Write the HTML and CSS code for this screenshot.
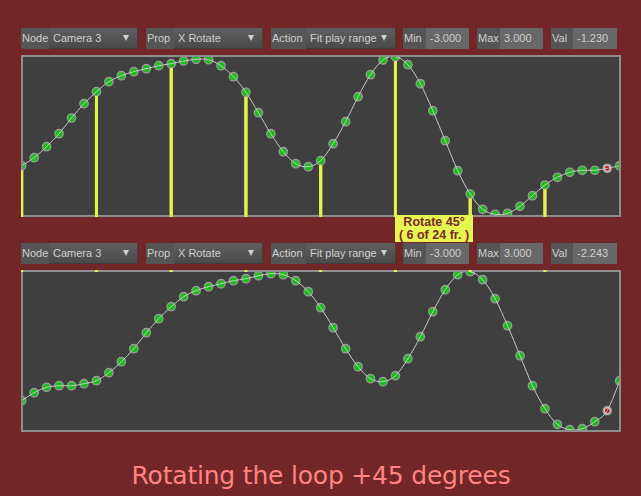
FILE: index.html
```html
<!DOCTYPE html>
<html>
<head>
<meta charset="utf-8">
<link rel="stylesheet" href="styles.css">
</head>
<body>
<div class="page">
  <div class="toolbar">
    <span class="lbl w-node">Node</span><span class="dd w-dd">Camera 3<i class="arrow"></i></span>
    <span class="lbl w-node gap">Prop</span><span class="dd w-dd">X Rotate<i class="arrow"></i></span>
    <span class="lbl w-act gap">Action</span><span class="dd w-dd2">Fit play range<i class="arrow"></i></span>
    <span class="lbl w-min gap7">Min</span><span class="val w-val">-3.000</span>
    <span class="lbl w-min gap">Max</span><span class="val w-val">3.000</span>
    <span class="lbl w-vl gap">Val</span><span class="val w-val2">-1.230</span>
  </div>
  <svg class="graph g1" id="g1" width="600" height="162" viewBox="21 55 600 162"></svg>
  <div class="toolbar">
    <span class="lbl w-node">Node</span><span class="dd w-dd">Camera 3<i class="arrow"></i></span>
    <span class="lbl w-node gap">Prop</span><span class="dd w-dd">X Rotate<i class="arrow"></i></span>
    <span class="lbl w-act gap">Action</span><span class="dd w-dd2">Fit play range<i class="arrow"></i></span>
    <span class="lbl w-min gap7">Min</span><span class="val w-val">-3.000</span>
    <span class="lbl w-min gap">Max</span><span class="val w-val">3.000</span>
    <span class="lbl w-vl gap">Val</span><span class="val w-val2">-2.243</span>
  </div>
  <svg class="graph g2" id="g2" width="600" height="162" viewBox="21 270 600 162"></svg>
  <div class="caption">Rotating the loop +45 degrees</div>
  <div class="tip">Rotate 45°<br>( 6 of 24 fr. )</div>
</div>
<script src="script.js"></script>
</body>
</html>
```

FILE: styles.css
```css
html, body {
  margin: 0;
  padding: 0;
  background: #732628;
  width: 641px;
  height: 496px;
  overflow: hidden;
}
.page {
  position: relative;
  padding: 28px 0 0 21px;
  font-family: "Liberation Sans", Arial, sans-serif;
}
.toolbar {
  display: flex;
  height: 21px;
  margin-bottom: 6px;
  font-size: 11px;
  line-height: 21px;
  color: #cfcfcf;
  white-space: nowrap;
}
.lbl {
  display: block;
  box-sizing: border-box;
  height: 21px;
  background: #555555;
  padding-left: 1px;
}
.gap { margin-left: 8px; }
.gap7 { margin-left: 7px; }
.w-node { width: 28px; }
.w-act { width: 35px; }
.w-min { width: 23px; }
.w-vl { width: 22px; }
.dd {
  display: flex;
  box-sizing: border-box;
  align-items: center;
  justify-content: space-between;
  height: 21px;
  padding: 0 8px 0 4px;
  background: linear-gradient(#5f5f5f, #4a4a4a);
  border-right: 1px solid #3e3e3e;
  border-bottom: 1px solid #3e3e3e;
}
.w-dd { width: 89px; }
.w-dd2 { width: 90px; }
.arrow {
  display: block;
  width: 0;
  height: 0;
  border-left: 3.5px solid transparent;
  border-right: 3.5px solid transparent;
  border-top: 6px solid #cfcfcf;
}
.val {
  display: block;
  box-sizing: border-box;
  height: 21px;
  background: #686868;
  padding-left: 4px;
}
.w-val { width: 43px; }
.w-val2 { width: 44px; }
.graph {
  display: block;
}
.g1 { margin-bottom: 26px; }
.g2 { margin-bottom: 29px; }
.caption {
  width: 600px;
  text-align: center;
  font-family: "DejaVu Sans", Verdana, sans-serif;
  font-size: 25px;
  letter-spacing: -0.2px;
  line-height: 30px;
  color: #ff8585;
}
.tip {
  position: absolute;
  left: 395px;
  top: 215px;
  width: 78px;
  height: 27px;
  box-sizing: border-box;
  padding-top: 1px;
  background: #e6f550;
  color: #7a2a2a;
  font-family: "Liberation Sans", Arial, sans-serif;
  font-weight: bold;
  font-size: 12.5px;
  line-height: 13px;
  text-align: center;
  white-space: nowrap;
}
```

FILE: script.js
```js
(function () {
  var NS = "http://www.w3.org/2000/svg";
  var y1 = [165.7,157.7,146.7,133.7,118,103.7,91.7,81.7,75.7,71.7,68.7,65.7,63.7,61,59.3,59.7,65.7,76.7,92.3,112.7,133.7,151.7,163.7,166.7,160.7,143.7,121.7,96.7,74.7,60,56.7,64.7,83.7,110.7,140.7,170.7,194,209.3,214.3,213.3,206.3,195.7,185,177.3,172.3,170.3,170.3,168.3,165.7];
  var y2 = [400.7,392.7,387.3,385.7,385.7,383.7,380.7,372.7,361.7,348.7,332.7,318.7,306.7,296.7,290.7,286.7,283.7,280.7,278.7,275.7,273.7,274.7,280.7,291.7,307.7,327.7,348.7,366.7,378.7,381.7,375.7,358.7,336.7,311.7,289.7,274.7,271.7,279.7,298.7,325.7,355.7,385.7,408.7,424.3,429.7,428.7,421.7,410.7,380.7];

  function el(name, attrs, parent) {
    var e = document.createElementNS(NS, name);
    for (var k in attrs) e.setAttribute(k, attrs[k]);
    parent.appendChild(e);
    return e;
  }

  function smooth(p) {
    var d = "M" + p[0][0] + "," + p[0][1];
    for (var i = 0; i < p.length - 1; i++) {
      var p0 = p[i - 1] || p[i], p1 = p[i], p2 = p[i + 1], p3 = p[i + 2] || p2;
      var c1x = p1[0] + (p2[0] - p0[0]) / 6, c1y = p1[1] + (p2[1] - p0[1]) / 6;
      var c2x = p2[0] - (p3[0] - p1[0]) / 6, c2y = p2[1] - (p3[1] - p1[1]) / 6;
      d += " C" + c1x.toFixed(2) + "," + c1y.toFixed(2) + " " + c2x.toFixed(2) + "," + c2y.toFixed(2) + " " + p2[0].toFixed(2) + "," + p2[1].toFixed(2);
    }
    return d;
  }

  function draw(svg, ys, top, fullBars) {
    var bottom = top + 162;
    el("rect", { x: 21, y: top, width: 600, height: 162, fill: "#3f3f3f" }, svg);
    var pts = ys.map(function (y, i) { return [21.7 + i * 12.458, y]; });
    if (fullBars) {
      for (var b = 0; b < 48; b += 6) {
        el("rect", { x: pts[b][0] - 1.5, y: pts[b][1], width: 3, height: bottom - pts[b][1], fill: "#e4f24c" }, svg);
      }
    }
    pts.forEach(function (p, i) {
      if (i === 47) {
        el("circle", { cx: p[0], cy: p[1], r: 4.2, fill: "#c4c4c4", stroke: "#9a9a9a", "stroke-width": 1.3 }, svg);
        el("circle", { cx: p[0], cy: p[1], r: 2.3, fill: "#d00000" }, svg);
      } else {
        el("circle", { cx: p[0], cy: p[1], r: 4.2, fill: "#17bf17", stroke: "#9a9a9a", "stroke-width": 1.3 }, svg);
      }
    });
    el("path", { d: smooth(pts), fill: "none", stroke: "#c8c8c8", "stroke-width": 1 }, svg);
    el("rect", { x: 22, y: top + 1, width: 598, height: 160, fill: "none", stroke: "#8e8e8e", "stroke-width": 2 }, svg);
    for (var c = 0; c < 48; c += 6) {
      if (fullBars) {
        el("rect", { x: pts[c][0] - 1.5, y: pts[c][1] + 4.5, width: 3, height: bottom - pts[c][1] - 4.5, fill: "#e4f24c" }, svg);
      } else {
        el("rect", { x: pts[c][0] - 1.5, y: top, width: 3, height: 2, fill: "#e4f24c" }, svg);
      }
    }
  }

  draw(document.getElementById("g1"), y1, 55, true);
  draw(document.getElementById("g2"), y2, 270, false);
})();
```
